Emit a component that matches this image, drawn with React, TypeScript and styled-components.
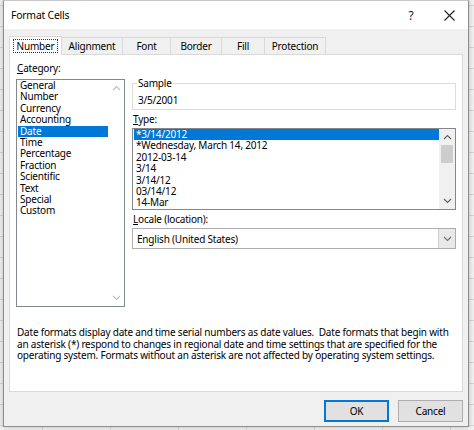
import React from 'react'
import styled, { createGlobalStyle } from 'styled-components'

const GlobalStyle = createGlobalStyle`
    html, body {
        margin: 0;
        padding: 0;
    }
    body {
        width: 474px;
        height: 430px;
        overflow: hidden;
        font-family: "Noto Sans", "Open Sans", sans-serif;
        font-size: 10px;
        letter-spacing: -0.2px;
        color: #000;
        background-color: #f4f4f4;
        background-image:
            linear-gradient(#d6d6d6 1px, transparent 1px),
            linear-gradient(90deg, #d6d6d6 1px, transparent 1px);
        background-size: 100% 21px, 68px 100%;
        background-position: 0 5px, 42px 0;
    }
`

const Page = styled.div`
    padding: 0 5px 0 3px;
`

const Dialog = styled.div`
    width: 464px;
    height: 425px;
    background: #f0f0f0;
    border: 1px solid #8e8e8e;
    border-top-color: #c8c8c8;
    box-shadow: 0 0 6px rgba(0, 0, 0, 0.25);
    display: flex;
    flex-direction: column;
`

const TitleBar = styled.div`
    height: 28px;
    background: #fff;
    display: flex;
    align-items: center;
    padding: 0 0 0 7px;
    font-size: 10.4px;
`

const Title = styled.span`
    flex: 1;
`

const TitleButton = styled.div`
    width: 38px;
    height: 28px;
    display: flex;
    align-items: center;
    justify-content: center;
    font-size: 12px;
    color: #222;
`

const Body = styled.div`
    flex: 1;
    display: flex;
    flex-direction: column;
    padding: 8px 5px 0 5px;
`

const Tabs = styled.div`
    display: flex;
    align-items: flex-end;
    height: 17px;
`

const Tab = styled.div<{ $active?: boolean; $w: number }>`
    width: ${p => p.$w}px;
    height: ${p => (p.$active ? 19 : 17)}px;
    box-sizing: border-box;
    display: flex;
    align-items: center;
    justify-content: center;
    background: ${p => (p.$active ? '#fff' : '#f0f0f0')};
    border: 1px solid #d9d9d9;
    border-bottom: none;
    border-left-width: ${p => (p.$active ? 1 : 0)}px;
    margin-bottom: ${p => (p.$active ? -1 : 0)}px;
    position: relative;
    z-index: ${p => (p.$active ? 1 : 0)};

    & > span {
        padding: 0 3px;
        border: ${p => (p.$active ? '1px dotted #333' : '1px solid transparent')};
        line-height: 12px;
    }
`

const Panel = styled.div`
    height: 338px;
    background: #fff;
    border: 1px solid #d9d9d9;
    box-sizing: border-box;
    padding: 7px 6px 0 6px;
    display: flex;
    flex-direction: column;
`

const Columns = styled.div`
    display: grid;
    grid-template-columns: 109px 324px;
    column-gap: 7px;
`

const Column = styled.div`
    display: flex;
    flex-direction: column;
`

const Label = styled.div<{ $gap?: number }>`
    line-height: 13px;
    height: 14px;
    margin-top: ${p => p.$gap ?? 0}px;
    padding-left: 1px;

    & u {
        text-decoration-thickness: 1px;
        text-underline-offset: 1px;
    }
`

const ListBox = styled.div<{ $h: number }>`
    height: ${p => p.$h}px;
    margin-top: 1px;
    border: 1px solid #828790;
    box-sizing: border-box;
    display: flex;
    background: #fff;
`

const ListItems = styled.div`
    flex: 1;
    padding: 0 0 0 1px;
`

const ListItem = styled.div<{ $selected?: boolean }>`
    line-height: 11.4px;
    height: 11.4px;
    padding-left: 2px;
    white-space: nowrap;
    background: ${p => (p.$selected ? '#0078d7' : 'transparent')};
    color: ${p => (p.$selected ? '#fff' : '#000')};
`

const ScrollBar = styled.div<{ $disabled?: boolean }>`
    width: 16px;
    display: flex;
    flex-direction: column;
    align-items: stretch;
    background: ${p => (p.$disabled ? '#fff' : '#f0f0f0')};
    color: ${p => (p.$disabled ? '#bfbfbf' : '#606060')};
`

const ScrollArrow = styled.div`
    height: 16px;
    display: flex;
    align-items: center;
    justify-content: center;
`

const ScrollTrack = styled.div`
    flex: 1;
    padding: 0 2px;
`

const ScrollThumb = styled.div`
    height: 18px;
    background: #cdcdcd;
`

const SampleBox = styled.fieldset`
    margin: 15px 0 3px 0;
    padding: 5px 5px 2px 5px;
    border: 1px solid #dcdcdc;
    line-height: 13px;

    & > legend {
        padding: 0 1px;
        margin-left: -1px;
        line-height: 12px;
    }
`

const SelectBox = styled.div`
    margin-top: 1px;
    height: 21px;
    border: 1px solid #adadad;
    background: #fff;
    box-sizing: border-box;
    display: flex;
    align-items: center;
`

const SelectText = styled.div`
    flex: 1;
    padding-left: 4px;
`

const SelectButton = styled.div`
    width: 16px;
    height: 100%;
    border-left: 1px solid #cfcfcf;
    background: #e9e9e9;
    display: flex;
    align-items: center;
    justify-content: center;
    color: #707070;
`

const Description = styled.div`
    margin-top: 20px;
    padding-left: 1px;
    line-height: 11.6px;
    white-space: pre-wrap;
`

const Footer = styled.div`
    flex: 1;
    display: flex;
    justify-content: flex-end;
    align-items: flex-start;
    gap: 9px;
    padding-top: 8px;
`

const Button = styled.button<{ $default?: boolean }>`
    width: 65px;
    height: 22px;
    font-family: inherit;
    font-size: 10px;
    letter-spacing: -0.2px;
    color: #000;
    background: #e1e1e1;
    border: 1px solid ${p => (p.$default ? '#0078d7' : '#adadad')};
    box-shadow: ${p => (p.$default ? 'inset 0 0 0 1px #0078d7' : 'none')};
    padding: 0;
`

const Chevron: React.FC<{ up?: boolean }> = ({ up }) => (
    <svg width="9" height="6" viewBox="0 0 9 6">
        <path
            d={up ? 'M1 5 L4.5 1.5 L8 5' : 'M1 1 L4.5 4.5 L8 1'}
            fill="none"
            stroke="currentColor"
            strokeWidth="1.1"
        />
    </svg>
)

const categories = ['General', 'Number', 'Currency', 'Accounting', 'Date', 'Time', 'Percentage', 'Fraction', 'Scientific', 'Text', 'Special', 'Custom']
const types = ['*3/14/2012', '*Wednesday, March 14, 2012', '2012-03-14', '3/14', '3/14/12', '03/14/12', '14-Mar']
const tabs: [string, number][] = [['Number', 53], ['Alignment', 61], ['Font', 48], ['Border', 51], ['Fill', 43], ['Protection', 61]]

const App: React.FC = () => {
    return <Page>
        <GlobalStyle />
        <Dialog>
            <TitleBar>
                <Title>Format Cells</Title>
                <TitleButton>?</TitleButton>
                <TitleButton>
                    <svg width="11" height="11" viewBox="0 0 11 11">
                        <path d="M0.5 0.5 L10.5 10.5 M10.5 0.5 L0.5 10.5" stroke="#222" strokeWidth="1.1" />
                    </svg>
                </TitleButton>
            </TitleBar>
            <Body>
                <Tabs>
                    {tabs.map(([name, w], i) =>
                        <Tab key={name} $w={w} $active={i === 0}><span>{name}</span></Tab>
                    )}
                </Tabs>
                <Panel>
                    <Columns>
                        <Column>
                            <Label><u>C</u>ategory:</Label>
                            <ListBox $h={228} style={{ marginTop: 3 }}>
                                <ListItems>
                                    {categories.map(c =>
                                        <ListItem key={c} $selected={c === 'Date'}>{c}</ListItem>
                                    )}
                                </ListItems>
                                <ScrollBar $disabled>
                                    <ScrollArrow><Chevron up /></ScrollArrow>
                                    <ScrollTrack />
                                    <ScrollArrow><Chevron /></ScrollArrow>
                                </ScrollBar>
                            </ListBox>
                        </Column>
                        <Column>
                            <SampleBox>
                                <legend>Sample</legend>
                                3/5/2001
                            </SampleBox>
                            <Label><u>T</u>ype:</Label>
                            <ListBox $h={82}>
                                <ListItems>
                                    {types.map(t =>
                                        <ListItem key={t} $selected={t === '*3/14/2012'}>{t}</ListItem>
                                    )}
                                </ListItems>
                                <ScrollBar>
                                    <ScrollArrow><Chevron up /></ScrollArrow>
                                    <ScrollTrack><ScrollThumb /></ScrollTrack>
                                    <ScrollArrow><Chevron /></ScrollArrow>
                                </ScrollBar>
                            </ListBox>
                            <Label $gap={3}><u>L</u>ocale (location):</Label>
                            <SelectBox>
                                <SelectText>English (United States)</SelectText>
                                <SelectButton><Chevron /></SelectButton>
                            </SelectBox>
                        </Column>
                    </Columns>
                    <Description>
                        {'Date formats display date and time serial numbers as date values.  Date formats that begin with an asterisk (*) respond to changes in regional date and time settings that are specified for the operating system. Formats without an asterisk are not affected by operating system settings.'}
                    </Description>
                </Panel>
                <Footer>
                    <Button $default>OK</Button>
                    <Button>Cancel</Button>
                </Footer>
            </Body>
        </Dialog>
    </Page>
}

export default App
